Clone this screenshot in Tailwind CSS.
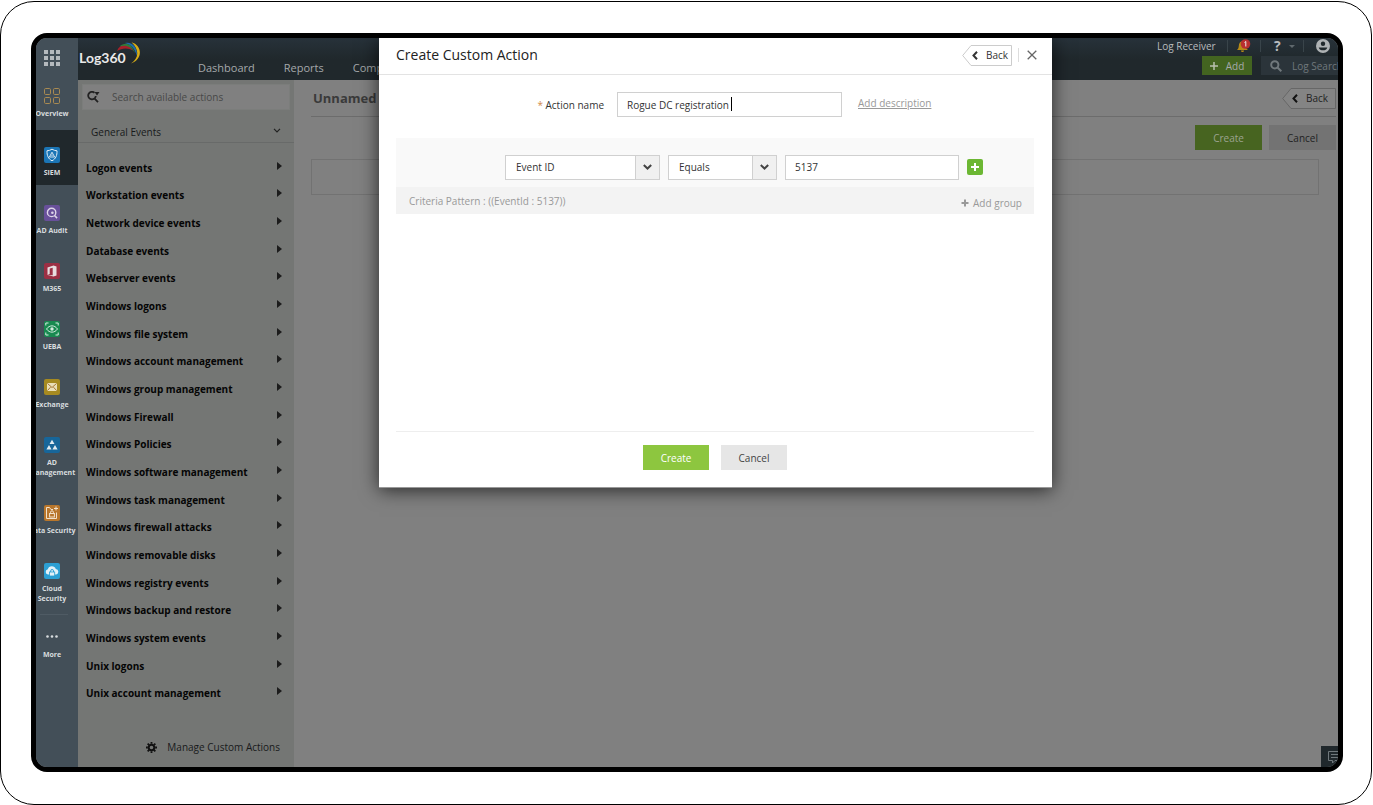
<!doctype html>
<html lang="en">
  <head>
    <meta charset="UTF-8" />
    <meta name="viewport" content="width=device-width, initial-scale=1.0" />
    <title>Log360 &mdash; Create Custom Action</title>
    <script src="https://cdn.jsdelivr.net/npm/@tailwindcss/browser@4"></script>
  </head>

  <body class="h-screen bg-white pt-px pr-px font-['Open_Sans',sans-serif] text-[10px] leading-4 text-[#333]">
    <!-- tablet frame -->
    <div class="h-full rounded-[34px] border border-black pt-[31px] pr-[28px] pb-[32px] pl-[30px]">
      <div class="relative flex h-full overflow-hidden rounded-2xl border-5 border-black bg-[#808080]">
        <!-- product rail -->
        <nav class="flex w-[42px] shrink-0 flex-col overflow-hidden bg-[#434f58] pt-3 text-center text-[7px] leading-[10px] font-bold text-[#d8dcde]">
          <button type="button" aria-label="Apps" class="mb-[5px] ml-2 size-4">
            <svg viewBox="0 0 16 16" class="size-4" fill="#b4b9bd">
              <path d="M0 0h4v4H0zM6 0h4v4H6zM12 0h4v4h-4zM0 6h4v4H0zM6 6h4v4H6zM12 6h4v4h-4zM0 12h4v4H0zM6 12h4v4H6zM12 12h4v4h-4z" />
            </svg>
          </button>

          <a href="#" class="mb-1 flex flex-col items-center gap-[5px] pt-[17px] pr-[10px] pb-[7px]">
            <svg viewBox="0 0 16 16" class="size-4 shrink-0" fill="none" stroke="#a88a52">
              <rect x=".5" y=".5" width="6" height="6" rx="1.2" />
              <rect x="9.5" y=".5" width="6" height="6" rx="1.2" />
              <rect x=".5" y="9.5" width="6" height="6" rx="1.2" />
              <rect x="9.5" y="9.5" width="6" height="6" rx="1.2" />
            </svg>
            <span class="whitespace-nowrap">Overview</span>
          </a>

          <a href="#" class="mb-[3px] flex flex-col items-center gap-[5px] bg-[#20282c] pt-[17px] pr-[10px] pb-[7px]">
            <svg viewBox="0 0 16 16" class="size-4 shrink-0" fill="none" stroke="#e3eef6">
              <rect width="16" height="16" rx="2" fill="#1b75b5" stroke="none" />
              <path d="M8 2.2c1.6 1 3.2 1.5 5 1.6.2 4.6-1.2 8-5 10-3.8-2-5.2-5.4-5-10 1.8-.1 3.4-.6 5-1.6z" />
              <path d="M8 5.2 10.6 10H5.4zM8 7.5V9" stroke-width=".9" />
            </svg>
            <span>SIEM</span>
          </a>

          <a href="#" class="mb-[3px] flex flex-col items-center gap-[5px] pt-[17px] pr-[10px] pb-[7px]">
            <svg viewBox="0 0 16 16" class="size-4 shrink-0" fill="none" stroke="#ddd5e8">
              <rect width="16" height="16" rx="2" fill="#68509a" stroke="none" />
              <circle cx="7.6" cy="7.4" r="4.2" stroke-width="1.4" />
              <circle cx="8.4" cy="7.8" r="1.3" fill="#ddd5e8" stroke="none" />
              <path d="m10.5 10.5 2.6 2.6" stroke-width="1.6" />
            </svg>
            <span class="whitespace-nowrap">AD Audit</span>
          </a>

          <a href="#" class="mb-[3px] flex flex-col items-center gap-[5px] pt-[17px] pr-[10px] pb-[7px]">
            <svg viewBox="0 0 16 16" class="size-4 shrink-0">
              <rect width="16" height="16" rx="2" fill="#9c2f44" />
              <path fill="#e8dde0" d="M3.5 4.5 9.5 2.5l3 1v9l-3 1-6-1.6 5.2.4V4.8l-3 .7V11l-2.200.9z" />
            </svg>
            <span>M365</span>
          </a>

          <a href="#" class="mb-[3px] flex flex-col items-center gap-[5px] pt-[17px] pr-[10px] pb-[7px]">
            <svg viewBox="0 0 16 16" class="size-4 shrink-0" fill="none" stroke="#d5ece0">
              <rect width="16" height="16" rx="2" fill="#188a50" stroke="none" />
              <path d="M1.8 4.5V2h2.7M11.5 2h2.7v2.5M14.2 11.5V14h-2.7M4.5 14H1.8v-2.5" />
              <path d="M2.5 8c3-4.2 8-4.2 11 0-3 4.2-8 4.2-11 0z" />
              <circle cx="8" cy="8" r="1.7" fill="#d5ece0" stroke="none" />
            </svg>
            <span>UEBA</span>
          </a>

          <a href="#" class="mb-[3px] flex flex-col items-center gap-[5px] pt-[17px] pr-[10px] pb-[7px]">
            <svg viewBox="0 0 16 16" class="size-4 shrink-0">
              <rect width="16" height="16" rx="2" fill="#a68a20" />
              <rect x="3" y="4" width="10" height="8" rx="1" fill="#eadfb8" />
              <path d="m3.5 4.5 4.500 4 4.500-4M3.500 11.500l3-3.300M12.500 11.500l-3-3.300" fill="none" stroke="#a67530" />
            </svg>
            <span class="whitespace-nowrap">Exchange</span>
          </a>

          <a href="#" class="mb-[3px] flex flex-col items-center gap-[5px] pt-[17px] pr-[10px] pb-[7px]">
            <svg viewBox="0 0 16 16" class="size-4 shrink-0" fill="#e0eaf0">
              <rect width="16" height="16" rx="2" fill="#17669a" />
              <path d="m8 2.800 2.500 4.200h-5zM5 8l2.600 4.500H2.400zM11 8l2.600 4.500H8.400z" />
            </svg>
            <span>AD<br />Management</span>
          </a>

          <a href="#" class="mb-[3px] flex flex-col items-center gap-[5px] pt-[17px] pr-[10px] pb-[7px]">
            <svg viewBox="0 0 16 16" class="size-4 shrink-0" fill="none" stroke="#f2e2cc">
              <rect width="16" height="16" rx="2" fill="#b8762c" stroke="none" />
              <path d="M12.500 7.500v6h-10v-11h3l1.500 2h2M12 1.500v4M10 3.500h4" />
              <path d="M6.600 8.500V7.200a1.400 1.400 0 0 1 2.800 0v1.300" />
              <rect x="5.6" y="8.5" width="4.8" height="3.5" />
            </svg>
            <span class="whitespace-nowrap">Data Security</span>
          </a>

          <a href="#" class="mb-[3px] flex flex-col items-center gap-[5px] pt-[17px] pr-[10px] pb-[7px]">
            <svg viewBox="0 0 16 16" class="size-4 shrink-0">
              <rect width="16" height="16" rx="2" fill="#2c9fd3" />
              <path fill="#e2f1f8" d="M4 11.500a2.700 2.700 0 0 1-.2-5.300 4.200 4.200 0 0 1 8-.2 2.800 2.800 0 0 1 .4 5.500z" />
              <path d="M6.700 9V7.900a1.400 1.400 0 0 1 2.800 0V9" fill="none" stroke="#2c9fd3" />
              <rect x="5.5" y="9" width="5.2" height="4" fill="#e2f1f8" stroke="#2c9fd3" stroke-width=".8" />
            </svg>
            <span>Cloud<br />Security</span>
          </a>

          <hr class="mr-[10px] ml-1 border-[#4f5b64]" />
          <a href="#" class="flex flex-col items-center gap-3 pt-5 pr-[10px]">
            <svg viewBox="0 0 12 3" class="h-[3px] w-3" fill="#d8dcde">
              <circle cx="1.5" cy="1.5" r="1.3" />
              <circle cx="6" cy="1.5" r="1.3" />
              <circle cx="10.5" cy="1.5" r="1.3" />
            </svg>
            <span>More</span>
          </a>
        </nav>

        <div class="flex min-w-0 flex-1 flex-col">
          <!-- top bar -->
          <header class="flex h-[42px] shrink-0 justify-between bg-linear-to-b from-[#27323a] to-[#20282c] to-50% text-[#a5a9ab]">
            <div class="flex">
              <a href="#" class="relative w-[120px] pt-[10px] pl-px font-['Lato',sans-serif] text-sm leading-5 font-bold text-[#e9e9e9]">
                Log360
                <svg viewBox="0 0 26 24" class="absolute top-[3px] left-[38px] h-6 w-[26px]">
                  <path fill="#a5202a" d="M1 10C4 2.500 12 2 17 9.500 12 6.500 6 6.800 1 10z" />
                  <path fill="#2d7d3c" d="M3.500 5.500C9 .5 16 2.500 19 12 15 5.500 10 3.500 3.500 5.500z" />
                  <path fill="#1d6cab" d="M9 2c7-1.500 12.500 4 12 13C18.500 7 15 3.500 9 2z" />
                  <path fill="#d6ad17" d="M15.500 1.200C26 4 27.500 18 15 22.500c8-5 8.500-14 .5-21.300z" />
                </svg>
              </a>
              <nav class="flex gap-[29px] pt-5 text-[11px] leading-5">
                <a href="#">Dashboard</a>
                <a href="#">Reports</a>
                <a href="#">Compliance</a>
              </nav>
            </div>
            <div class="flex w-[181px] flex-col gap-[2px]">
              <div class="flex h-4 items-center text-[#b9bcbe]">
                <a href="#" class="w-[70px]">Log Receiver</a>
                <button type="button" aria-label="Alerts" class="flex h-3 w-[33px] items-center border-l border-[#39444a] pl-2">
                  <svg viewBox="0 0 15 14" class="h-[14px] w-[15px]">
                    <path fill="#b68a17" d="M1 11c2-2 1.500-3 2-5.500C3.500 3 5 2.500 6.500 2.500 9 2.500 10 5 10 7c0 2 .5 3 2 4zM5 11.500h3c0 2-3 2-3 0z" />
                    <circle cx="9.5" cy="5" r="4.8" fill="#b92f2f" />
                    <path d="M8.500 3.500 9.800 2.500V7.500" fill="none" stroke="#eee" />
                  </svg>
                </button>
                <button type="button" aria-label="Help" class="flex h-3 w-[43px] items-center gap-2 border-l border-[#39444a] pl-[13px] text-sm font-bold">
                  ?
                  <svg viewBox="0 0 6 3" class="h-[3px] w-[6px]" fill="#5f686d"><path d="M0 0h6L3 3z" /></svg>
                </button>
                <button type="button" aria-label="Account" class="flex h-3 items-center border-l border-[#39444a] pl-3">
                  <svg viewBox="0 0 14 14" class="size-[14px]">
                    <circle cx="7" cy="7" r="7" fill="#aeb2b4" />
                    <circle cx="7" cy="4.8" r="2.2" fill="#20282c" />
                    <path d="M2.700 8.500h8.600C10.500 12.300 3.500 12.300 2.700 8.500z" fill="#20282c" />
                  </svg>
                </button>
              </div>
              <div class="flex h-[19px] gap-[9px] pl-[45px]">
                <button type="button" class="flex w-[50px] shrink-0 items-center justify-center gap-2 bg-[#436420] text-[#a5a9ab]">
                  <svg viewBox="0 0 8 8" class="size-2" stroke="#b9c0ae" stroke-width="1.5"><path d="M4 0v8M0 4h8" /></svg>
                  Add
                </button>
                <label class="flex min-w-0 flex-1 items-center gap-[10px] bg-[#2b343a] pl-[9px]">
                  <svg viewBox="0 0 12 12" class="size-3 shrink-0" fill="none" stroke="#70787c" stroke-width="2">
                    <circle cx="4.8" cy="4.8" r="3.6" /><path d="m7.500 7.500 3.800 3.800" />
                  </svg>
                  <input type="text" aria-label="Log Search" placeholder="Log Search" class="w-20 shrink-0 placeholder:text-[#70787c] outline-none" />
                </label>
              </div>
            </div>
          </header>

          <div class="flex min-h-0 flex-1">
            <!-- actions list -->
            <aside class="flex w-[216px] shrink-0 flex-col bg-[#747674] text-[#181a1b]">
              <label class="mx-1 mt-1 flex h-[26px] shrink-0 items-center gap-3 border border-[#7b7d7b] bg-[#808080] pl-1">
                <svg viewBox="0 0 13 12" class="h-3 w-[13px]" fill="none" stroke="#222" stroke-width="1.8">
                  <path d="M7.500 1.700A3.800 3.800 0 1 0 8.800 5M7.400 7.400l3.600 3.800" /><path d="M7.500 1h5L10 4.500z" fill="#222" stroke="none" />
                </svg>
                <input type="text" aria-label="Search available actions" placeholder="Search available actions" class="min-w-0 flex-1 placeholder:text-[#484848] outline-none" />
              </label>
              <button type="button" class="mt-2 flex h-[25px] shrink-0 items-center justify-between border-b border-[#686a69] pr-[13px] pl-[13px] pt-1">
                General Events
                <svg viewBox="0 0 8 5" class="mb-1 h-[5px] w-2" fill="none" stroke="#222" stroke-width="1.2"><path d="m1 .8 3 3 3-3" /></svg>
              </button>

              <ul class="mt-[11px] flex h-[553px] shrink-0 flex-col font-bold text-[#050505]" id="eventList"></ul>

              <button type="button" class="mt-8 flex items-center justify-end gap-[10px] pr-[14px]">
                <svg viewBox="0 0 12 12" class="size-[11px]" fill="none" stroke="#111">
                  <circle cx="6" cy="6" r="3.1" stroke-width="2.2" />
                  <path stroke-width="2" d="M6 0v2M6 10v2M0 6h2M10 6h2M1.800 1.800l1.400 1.400M8.800 8.800l1.400 1.400M10.200 1.800 8.800 3.200M3.200 8.800l-1.400 1.400" />
                </svg>
                Manage Custom Actions
              </button>
            </aside>

            <!-- page behind the dialog -->
            <main class="flex min-w-0 flex-1 flex-col pr-0.5 pl-[17px]">
              <div class="flex h-[37px] shrink-0 items-center justify-between border-b border-[#6c6c6c]">
                <h1 class="pl-0.5 text-[13px] font-bold text-[#3a3a3a]">Unnamed rule</h1>
                <button type="button" class="relative flex h-[21px] w-[54px] items-center gap-2 pl-[10px] text-[#222]">
                  <svg viewBox="0 0 54 21" class="absolute inset-0 h-[21px] w-[54px]" fill="#848484" stroke="#676767">
                    <path d="M.7 10.500 9 .5h44.500v20H9z" />
                  </svg>
                  <svg viewBox="0 0 6 9" class="relative h-[9px] w-[6px]" fill="none" stroke="#111" stroke-width="2"><path d="M5 .8 1.500 4.500 5 8.200" /></svg>
                  <span class="relative">Back</span>
                </button>
              </div>
              <div class="mt-2 flex justify-end gap-[7px]">
                <button type="button" class="h-[25px] w-[67px] bg-[#476420] text-[#9ca390]">Create</button>
                <button type="button" class="h-[25px] w-[67px] bg-[#737373] text-[#222]">Cancel</button>
              </div>
              <div class="mt-[9px] mr-[17px] h-9 border border-[#727272]"></div>
            </main>
          </div>
        </div>

        <button type="button" aria-label="Chat" class="absolute right-0 bottom-0 flex h-[21px] w-[17px] items-center overflow-hidden bg-[#20282c] pl-[7px]">
          <svg viewBox="0 0 14 14" class="size-[14px] shrink-0" fill="none" stroke="#70787c"><path d="M.5 1.500h13v9H7L4.500 13v-2.500h-4zM3 4.500h8M3 7.500h8" /></svg>
        </button>

        <!-- dialog -->
        <section role="dialog" aria-labelledby="dialogTitle" class="absolute top-0 left-[343px] flex h-[450px] w-[673px] flex-col border-b border-[#999] bg-white shadow-[0_2px_18px_rgba(0,0,0,0.7)]">
          <header class="flex h-[37px] shrink-0 items-center border-b border-[#e3e3e3] pr-[15px] pb-[2px] pl-[17px]">
            <h2 id="dialogTitle" class="flex-1 text-sm text-[#222]">Create Custom Action</h2>
            <button type="button" class="relative flex h-[21px] w-[50px] items-center gap-2 pl-[10px]">
              <svg viewBox="0 0 50 21" class="absolute inset-0 h-[21px] w-[50px]" fill="#fff" stroke="#ccc">
                <path d="M.7 10.500 9 .5h40.500v20H9z" />
              </svg>
              <svg viewBox="0 0 6 9" class="relative h-[9px] w-[6px]" fill="none" stroke="#333" stroke-width="2"><path d="M5 .8 1.500 4.500 5 8.200" /></svg>
              <span class="relative">Back</span>
            </button>
            <span class="mx-[6px] h-[14px] w-px bg-[#ddd]"></span>
            <button type="button" aria-label="Close" class="pl-0.5">
              <svg viewBox="0 0 10 10" class="size-[10px]" stroke="#666" stroke-width="1.3"><path d="m.7.7 8.600 8.600M9.300.7.7 9.300" /></svg>
            </button>
          </header>

          <form class="flex min-h-0 flex-1 flex-col pr-[18px] pl-[17px]">
            <div class="mt-[17px] flex items-center">
              <label for="actionName" class="w-[208px] text-right"><span class="text-[#d08a4a]">*</span> Action name</label>
              <div class="relative ml-[13px]">
                <input id="actionName" type="text" value="Rogue DC registration" class="block h-[25px] w-[225px] border border-[#d0d0d0] pl-[9px] outline-none" />
                <span class="absolute top-[5px] left-[114px] h-[14px] w-px bg-black"></span>
              </div>
              <a href="#" class="ml-4 pb-1 text-[#999] underline">Add description</a>
            </div>

            <div class="mt-[21px]">
              <div class="flex h-[49px] items-center bg-[#f9f9f9] pt-[9px] pl-[109px]">
                <div class="relative">
                  <select aria-label="Field" class="block h-[25px] w-[155px] appearance-none border border-[#d0d0d0] bg-white pl-[10px]">
                    <option>Event ID</option>
                  </select>
                  <span class="pointer-events-none absolute inset-y-px right-px flex w-6 items-center justify-center border-l border-[#d0d0d0] bg-[#f0f0f0]">
                    <svg viewBox="0 0 9 6" class="h-[6px] w-[9px]" fill="none" stroke="#444" stroke-width="2"><path d="m.8 1 3.700 3.500L8.200 1" /></svg>
                  </span>
                </div>
                <div class="relative ml-2">
                  <select aria-label="Condition" class="block h-[25px] w-[109px] appearance-none border border-[#d0d0d0] bg-white pl-[10px]">
                    <option>Equals</option>
                  </select>
                  <span class="pointer-events-none absolute inset-y-px right-px flex w-6 items-center justify-center border-l border-[#d0d0d0] bg-[#f0f0f0]">
                    <svg viewBox="0 0 9 6" class="h-[6px] w-[9px]" fill="none" stroke="#444" stroke-width="2"><path d="m.8 1 3.700 3.500L8.200 1" /></svg>
                  </span>
                </div>
                <input aria-label="Value" type="text" value="5137" class="ml-2 h-[25px] w-[174px] border border-[#d0d0d0] bg-white pl-[9px]" />
                <button type="button" aria-label="Add condition" class="ml-2 flex size-4 items-center justify-center rounded-xs bg-[#6cb733]">
                  <svg viewBox="0 0 8 8" class="size-2" stroke="#fff" stroke-width="2"><path d="M4 0v8M0 4h8" /></svg>
                </button>
              </div>
              <div class="flex h-[27px] items-center justify-between bg-[#f3f3f3] pr-3 pl-[13px] text-[#999]">
                <span>Criteria Pattern : ((EventId : 5137))</span>
                <button type="button" class="flex items-center gap-1 pt-1">
                  <svg viewBox="0 0 8 8" class="size-2" stroke="#999" stroke-width="2"><path d="M4 .5v7M.5 4h7" /></svg>
                  Add group
                </button>
              </div>
            </div>

            <div class="mt-auto flex h-14 shrink-0 justify-center gap-3 border-t border-[#eee] pt-[13px]">
              <button type="submit" class="h-[25px] w-[66px] bg-[#8dc63f] text-white">Create</button>
              <button type="button" class="h-[25px] w-[66px] bg-[#e6e6e6] text-[#444]">Cancel</button>
            </div>
          </form>
        </section>
      </div>
    </div>

    <script>
      const events = [
        "Logon events",
        "Workstation events",
        "Network device events",
        "Database events",
        "Webserver events",
        "Windows logons",
        "Windows file system",
        "Windows account management",
        "Windows group management",
        "Windows Firewall",
        "Windows Policies",
        "Windows software management",
        "Windows task management",
        "Windows firewall attacks",
        "Windows removable disks",
        "Windows registry events",
        "Windows backup and restore",
        "Windows system events",
        "Unix logons",
        "Unix account management",
      ];

      document.querySelector("#eventList").innerHTML = events
        .map(
          (name) => `
          <li class="flex min-h-0 flex-1">
            <a href="#" class="flex flex-1 items-center justify-between pr-3 pl-2">
              ${name}
              <svg viewBox="0 0 5 8" class="mb-1 h-2 w-[5px]" fill="#1c1c1c"><path d="M0 0v8l5-4z" /></svg>
            </a>
          </li>`
        )
        .join("");
    </script>
  </body>
</html>
